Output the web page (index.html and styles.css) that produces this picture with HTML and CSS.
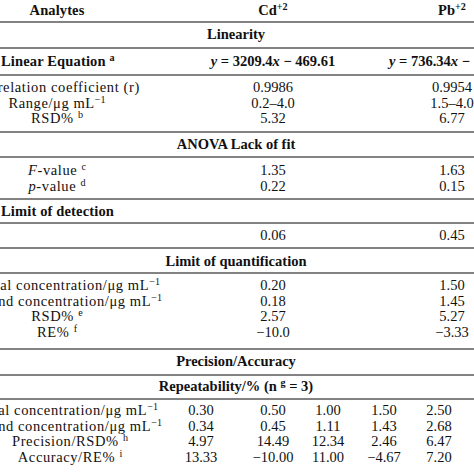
FILE: index.html
```html
<!DOCTYPE html>
<html>
<head>
<meta charset="utf-8">
<link rel="stylesheet" href="styles.css">
</head>
<body>
<div class="sheet">
  <div class="table">
    <div class="row blk b-head">
      <div class="lab b">Analytes</div>
      <div class="b">Cd<sup>+2</sup></div>
      <div class="b">Pb<sup>+2</sup></div>
    </div>

    <div class="row blk b-lin"><div class="span b">Linearity</div></div>

    <div class="row blk b-eq">
      <div class="lab b left">Linear Equation <sup>a</sup></div>
      <div class="b"><i>y</i> = 3209.4<i>x</i> − 469.61</div>
      <div class="b left pbeq"><i>y</i> = 736.34<i>x</i> −</div>
    </div>

    <div class="blk grp g-lin">
      <div class="row"><div class="lab">Correlation coefficient (r)</div><div>0.9986</div><div>0.9954</div></div>
      <div class="row"><div class="lab">Range/μg mL<sup>−1</sup></div><div>0.2–4.0</div><div>1.5–4.0</div></div>
      <div class="row"><div class="lab">RSD% <sup>b</sup></div><div>5.32</div><div>6.77</div></div>
    </div>

    <div class="row blk b-anova"><div class="span b">ANOVA Lack of fit</div></div>

    <div class="blk grp g-anova">
      <div class="row"><div class="lab"><i>F</i>-value <sup>c</sup></div><div>1.35</div><div>1.63</div></div>
      <div class="row"><div class="lab"><i>p</i>-value <sup>d</sup></div><div>0.22</div><div>0.15</div></div>
    </div>

    <div class="row blk b-lod"><div class="span b left lodh">Limit of detection</div></div>

    <div class="blk grp g-lod">
      <div class="row"><div class="lab"></div><div>0.06</div><div>0.45</div></div>
    </div>

    <div class="row blk b-loq"><div class="span b">Limit of quantification</div></div>

    <div class="blk grp g-loq">
      <div class="row"><div class="lab tail t1">Nominal concentration/μg mL<sup>−1</sup></div><div>0.20</div><div>1.50</div></div>
      <div class="row"><div class="lab tail t2">Found concentration/μg mL<sup>−1</sup></div><div>0.18</div><div>1.45</div></div>
      <div class="row"><div class="lab">RSD% <sup>e</sup></div><div>2.57</div><div>5.27</div></div>
      <div class="row"><div class="lab">RE% <sup>f</sup></div><div>−10.0</div><div>−3.33</div></div>
    </div>

    <div class="row blk b-prec"><div class="span b">Precision/Accuracy</div></div>

    <div class="row blk b-rep"><div class="span b">Repeatability/% (n <sup>g</sup> = 3)</div></div>

    <div class="grp g-rep">
      <div class="rrow"><div class="lab tail r1">Nominal concentration/μg mL<sup>−1</sup></div><div>0.30</div><div>0.50</div><div>1.00</div><div>1.50</div><div>2.50</div></div>
      <div class="rrow"><div class="lab tail r2">Found concentration/μg mL<sup>−1</sup></div><div>0.34</div><div>0.45</div><div>1.11</div><div>1.43</div><div>2.68</div></div>
      <div class="rrow"><div class="lab mid">Precision/RSD% <sup>h</sup></div><div>4.97</div><div>14.49</div><div>12.34</div><div>2.46</div><div>6.47</div></div>
      <div class="rrow"><div class="lab mid">Accuracy/RE% <sup>i</sup></div><div>13.33</div><div>−10.00</div><div>11.00</div><div>−4.67</div><div>7.20</div></div>
    </div>
  </div>
</div>
</body>
</html>
```

FILE: styles.css
```css
html, body {
  margin: 0;
  padding: 0;
  background: #ffffff;
}

body {
  width: 474px;
  height: 474px;
  overflow: hidden;
  font-family: "Liberation Serif", "Times New Roman", serif;
  font-size: 14.5px;
  color: #111111;
}

.sheet {
  width: 474px;
  height: 474px;
  overflow: hidden;
}

.table {
  margin-left: -60px;
  width: 592px;
}

.row {
  display: grid;
  grid-template-columns: 234px 198px 160px;
  text-align: center;
  white-space: nowrap;
  line-height: 16px;
}

.rrow {
  display: grid;
  grid-template-columns: 225px 72px 72px 38px 74px 36px;
  text-align: center;
  white-space: nowrap;
}

.grp .row,
.grp .rrow {
  line-height: 15.5px;
}

.blk {
  border-bottom: 2px solid #828282;
}

.span {
  grid-column: 1 / -1;
}

.b {
  font-weight: bold;
}

.left {
  text-align: left;
}

.lab {
  letter-spacing: 0.6px;
}

.lab.b {
  letter-spacing: 0.1px;
}

.b-eq .lab.left,
.lodh {
  padding-left: 61px;
  letter-spacing: 0.15px;
}

.pbeq {
  padding-left: 17px;
}

.tail {
  text-align: right;
}

.t1 { padding-right: 14px; }
.t2 { padding-right: 12px; }
.r1 { padding-right: 7px; }
.r2 { padding-right: 3px; }

.mid {
  padding-left: 35px;
}

sup {
  font-size: 0.7em;
  line-height: 0;
  vertical-align: 0.5em;
  letter-spacing: 0;
}

/* vertical rhythm of the blocks */
.b-head { padding: 2px 0 3px; }
.b-lin { padding: 3px 0 5px; }
.b-eq { padding: 4px 0 5px; }
.g-lin { padding: 4px 0 4.5px; }
.b-anova { padding: 3px 0 4px; }
.g-anova { padding: 5px 0 4px; }
.b-lod { padding: 3px 0 3px; }
.g-lod { padding: 4px 0 3.5px; }
.b-loq { padding: 4px 0 3px; }
.g-loq { padding: 4px 0 8px; }
.b-prec { padding: 3px 0 5px; }
.b-rep { padding: 2px 0 4px; }
.g-rep { padding: 3px 0 0; }
```
